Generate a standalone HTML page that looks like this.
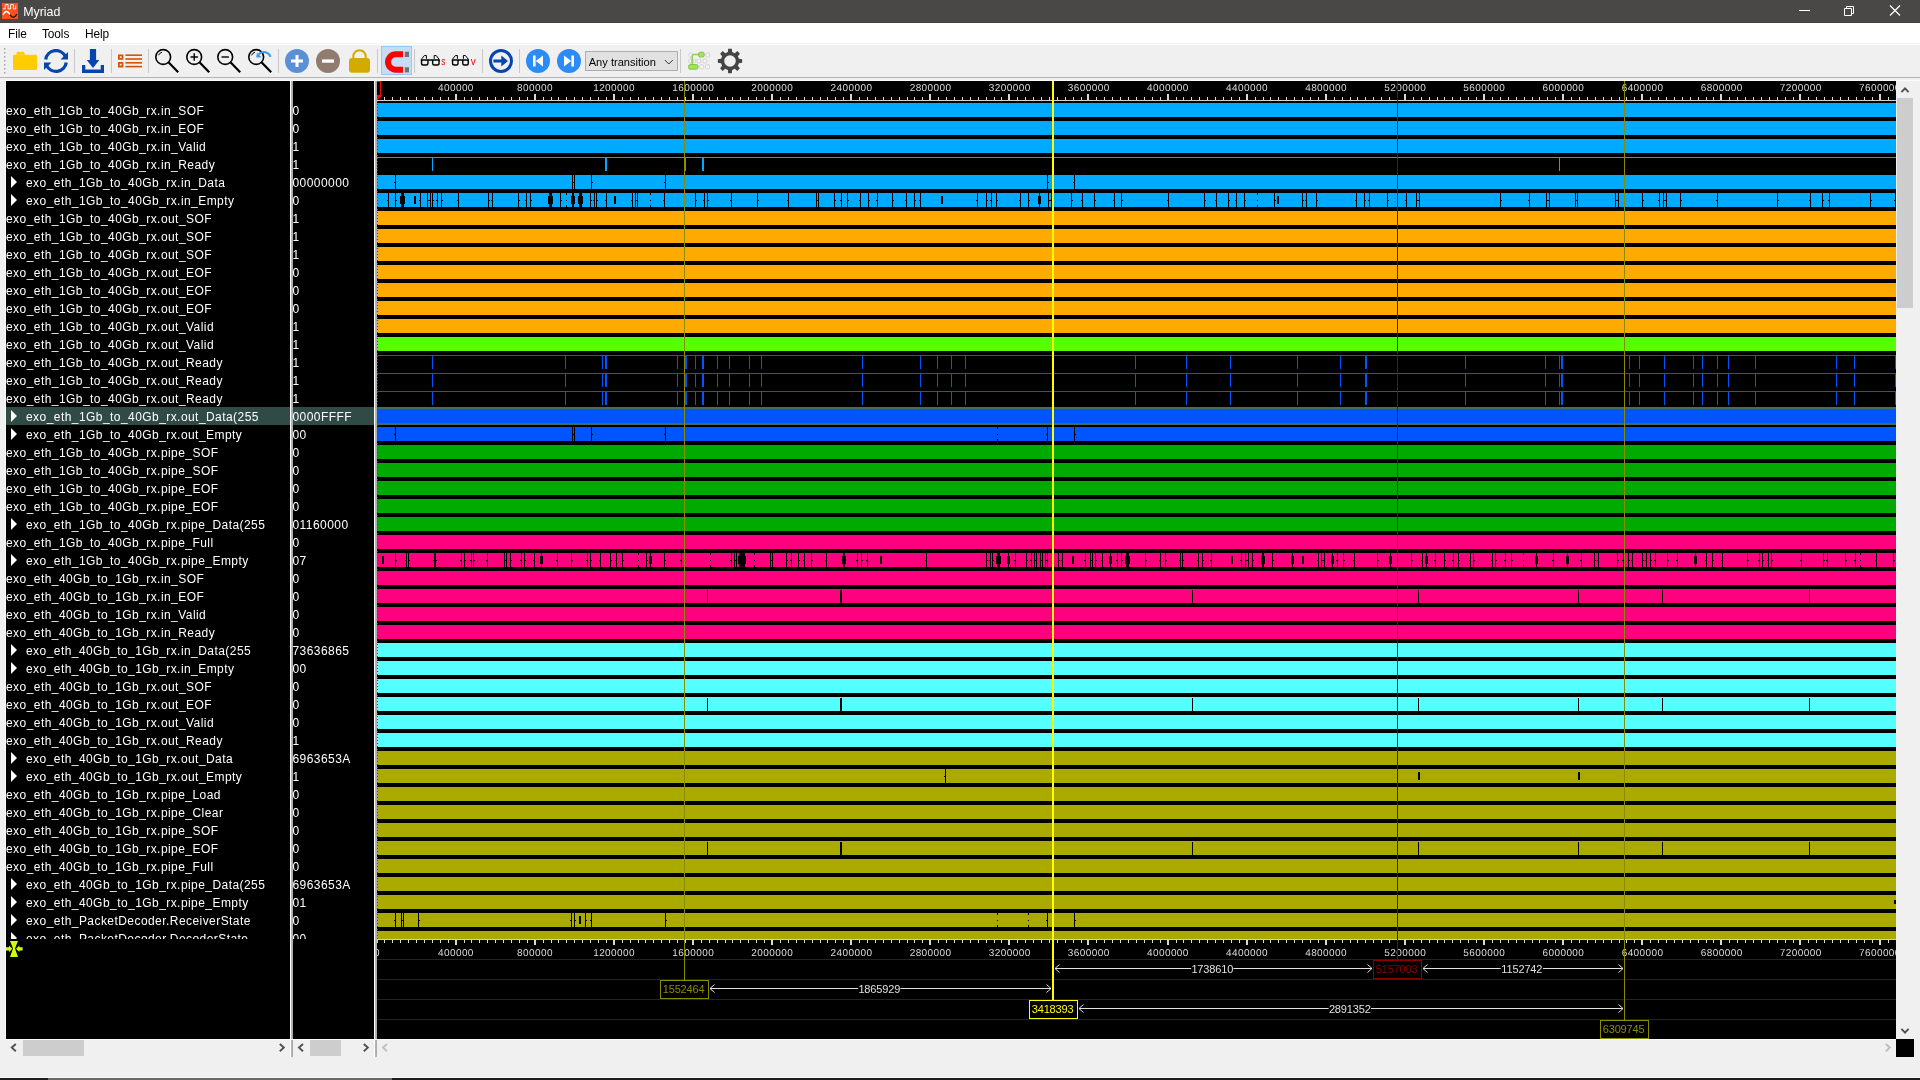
<!DOCTYPE html>
<html><head><meta charset="utf-8"><title>Myriad</title>
<style>
html,body{margin:0;padding:0;}
body{width:1920px;height:1080px;overflow:hidden;background:#f0f0f0;font-family:"Liberation Sans",sans-serif;position:relative;}
.abs{position:absolute;}
.gl{will-change:transform;}
#title{left:0;top:0;width:1920px;height:23px;background:#4a4847;}
#title .t{left:23.2px;top:3.6px;color:#fff;font-size:12.4px;line-height:16px;}
#menu{left:0;top:23px;width:1920px;height:20px;background:#fff;}
#mline{left:0;top:43px;width:1920px;height:1px;background:#f4f4f4;}
#tline{left:0;top:22px;width:1920px;height:1px;background:#434140;}
#menu span{position:absolute;top:3px;font-size:11.9px;letter-spacing:-0.1px;line-height:16px;color:#000;}
#tb{left:0;top:44px;width:1920px;height:33px;background:#f0f0f0;border-top:1px solid #fcfcfc;box-sizing:border-box;}
#tbline{left:0;top:77px;width:1920px;height:1px;background:#b4b4b4;}
#tbline2{left:0;top:80px;width:1920px;height:1px;background:#fcfcfc;}
.panel{background:#000;overflow:hidden;}
.nm{position:absolute;left:0;height:18px;line-height:18px;font-size:12px;letter-spacing:0.44px;color:#fff;white-space:pre;}
.sel{position:absolute;left:0;width:100%;height:18px;background:#304b46;}
.tri{position:absolute;left:5px;width:0;height:0;border-left:6px solid #fff;border-top:6px solid transparent;border-bottom:6px solid transparent;}
.spl{background:linear-gradient(90deg,#fff 0,#fff 33%,#b8b8b8 34%,#a8a8a8 100%);}
</style></head><body>

<div id="title" class="abs gl">
<svg class="abs" style="left:2px;top:3px" width="16" height="16" viewBox="0 0 16 16"><rect width="16" height="16" fill="#ff4f1f"/><path d="M0.8 5.9H3.3V1.6H6.1V5.9H8.6V1.6H11.4V5.9H13.7V2.6" fill="none" stroke="#fff" stroke-width="1" stroke-opacity="0.9"/><path d="M1 12Q4.3 5.2 8 11.6" fill="none" stroke="#fff" stroke-width="1.3"/><path d="M8 11.6Q11.3 17.2 14.8 11.2" fill="none" stroke="#111" stroke-width="1.3"/></svg>
<div class="abs t">Myriad</div>
<svg class="abs" style="left:1780px;top:0" width="140" height="23" viewBox="0 0 140 23" fill="none" stroke="#fff" stroke-width="1"><path d="M19 10.5H30"/><path d="M64.5 8.5H71.5V15.5H64.5Z"/><path d="M66.5 8.5V6.5H73.5V13.5H71.5"/><path d="M110 5.5L120 15.5M120 5.5L110 15.5" stroke-width="1.2"/></svg>
</div>
<div id="menu" class="abs gl"><span style="left:8px">File</span><span style="left:42px">Tools</span><span style="left:85px">Help</span></div>
<div id="mline" class="abs"></div><div id="tline" class="abs"></div><div id="tb" class="abs"></div><div id="tbline" class="abs"></div><div id="tbline2" class="abs"></div>
<svg class="abs gl" style="left:0;top:44px" width="760" height="34" viewBox="0 44 760 34" font-family="Liberation Sans, sans-serif">
<rect x="4" y="48" width="1.5" height="1.5" fill="#a8a8a8"/>
<rect x="4" y="52" width="1.5" height="1.5" fill="#a8a8a8"/>
<rect x="4" y="56" width="1.5" height="1.5" fill="#a8a8a8"/>
<rect x="4" y="60" width="1.5" height="1.5" fill="#a8a8a8"/>
<rect x="4" y="64" width="1.5" height="1.5" fill="#a8a8a8"/>
<rect x="4" y="68" width="1.5" height="1.5" fill="#a8a8a8"/>
<rect x="4" y="72" width="1.5" height="1.5" fill="#a8a8a8"/>
<rect x="74" y="49" width="1" height="24" fill="#c8c8c8"/>
<rect x="111" y="49" width="1" height="24" fill="#c8c8c8"/>
<rect x="148" y="49" width="1" height="24" fill="#c8c8c8"/>
<rect x="278" y="49" width="1" height="24" fill="#c8c8c8"/>
<rect x="377" y="49" width="1" height="24" fill="#c8c8c8"/>
<rect x="414" y="49" width="1" height="24" fill="#c8c8c8"/>
<rect x="482" y="49" width="1" height="24" fill="#c8c8c8"/>
<rect x="519" y="49" width="1" height="24" fill="#c8c8c8"/>
<rect x="680" y="49" width="1" height="24" fill="#c8c8c8"/>
<path d="M16 54.8L16.8 52.4Q17 51.8 17.8 51.8H23.2Q24 51.8 24.2 52.4L25 54.8Z" fill="#ffcc00"/>
<rect x="13" y="54.7" width="24" height="15.3" rx="1.3" fill="#ffcc00"/>
<g fill="none" stroke="#0645ad" stroke-width="3.3"><path d="M45.7 59.5A10.4 10.4 0 0 1 65.4 56.6"/><path d="M66.3 62.5A10.4 10.4 0 0 1 46.6 65.4"/></g>
<path d="M68 52V59.6H60.6z" fill="#0645ad"/><path d="M44 70V62.4H51.4z" fill="#0645ad"/>
<path d="M89.9 49H96.1V60H99.3L93 68L86.7 60H89.9Z" fill="#0645ad"/>
<path d="M82 65H85.3V69.5H100.7V65H104V73H82Z" fill="#0645ad"/>
<g fill="#d35400"><path d="M118 54.4h5.4v5.4h-5.4zM119.8 56.2v1.8h1.8v-1.8zM118 62h5.4v5.4h-5.4zM119.8 63.8v1.8h1.8v-1.8z" fill-rule="evenodd"/><rect x="125.4" y="54.4" width="16.6" height="1.6"/><rect x="125.4" y="58.2" width="16.6" height="1.6"/><rect x="125.4" y="62" width="16.6" height="1.6"/><rect x="125.4" y="65.8" width="16.6" height="1.6"/></g>
<circle cx="163.2" cy="57" r="7.4" fill="none" stroke="#000" stroke-width="1.6"/>
<path d="M168.5 62.300000000000004L178.2 72.2" stroke="#000" stroke-width="2.2" fill="none"/>
<path d="M158.6 55.3A5 5 0 0 1 162.0 52.2" stroke="#000" stroke-width="1" fill="none"/>
<circle cx="194.2" cy="57" r="7.4" fill="none" stroke="#000" stroke-width="1.6"/>
<path d="M199.5 62.300000000000004L209.2 72.2" stroke="#000" stroke-width="2.2" fill="none"/>
<path d="M190.5 57H197.89999999999998M194.2 53.3V60.7" stroke="#000" stroke-width="1.4" fill="none"/>
<circle cx="225.2" cy="57" r="7.4" fill="none" stroke="#000" stroke-width="1.6"/>
<path d="M230.5 62.300000000000004L240.2 72.2" stroke="#000" stroke-width="2.2" fill="none"/>
<path d="M221.5 57H228.89999999999998" stroke="#000" stroke-width="1.4" fill="none"/>
<circle cx="256.2" cy="57" r="7.4" fill="none" stroke="#000" stroke-width="1.6"/>
<path d="M261.5 62.300000000000004L271.2 72.2" stroke="#000" stroke-width="2.2" fill="none"/>
<path d="M251.6 55.3A5 5 0 0 1 255.0 52.2" stroke="#000" stroke-width="1" fill="none"/>
<path d="M270.6 56.8A7.2 7.2 0 0 0 258.8 54.2" stroke="#3a9de8" stroke-width="2" fill="none"/>
<path d="M256.2 57.6L257 52.6L261.4 57.2Z" fill="#3a9de8"/>
<circle cx="297" cy="61" r="12" fill="#5b8fd8"/><path d="M291 59.5h4.5v-4.5h3v4.5h4.5v3h-4.5v4.5h-3v-4.5h-4.5z" fill="#fff"/>
<circle cx="328" cy="61" r="12" fill="#917b6e"/><rect x="322" y="59.4" width="12" height="3.3" fill="#fff"/>
<path d="M353.3 59V56.4A6.2 6.2 0 0 1 365.7 56.4V59" fill="none" stroke="#d4aa00" stroke-width="2"/>
<rect x="349" y="58" width="21" height="14.8" rx="3" fill="#d4aa00"/>
<rect x="381.5" y="46.5" width="30" height="28" fill="#c3def4" stroke="#92c9f8" stroke-width="1"/>
<path d="M403 51.3H395.7A10.7 10.7 0 0 0 395.7 72.7H403V66.7H395.7A4.7 4.7 0 0 1 395.7 57.3H403Z" fill="#ff0000"/>
<rect x="404.8" y="51.7" width="4.2" height="5.3" fill="#707070"/><rect x="404.8" y="67.3" width="4.2" height="5.1" fill="#707070"/>
<g fill="none" stroke="#000" stroke-width="1.4" stroke-linejoin="miter"><path d="M421.55 60V63.2Q421.55 65 423.35 65H426.3Q427.95 65 427.95 63.2V60"/><path d="M439.05 60V63.2Q439.05 65 437.25 65H434.3Q432.65000000000003 65 432.65000000000003 63.2V60"/><path d="M420.8 60H439.8" stroke-width="1.5"/><path d="M421.40000000000003 59.4L424.40000000000003 55.5H426.40000000000003V58.8" stroke-width="1"/><path d="M439.2 59.4L436.2 55.5H434.2V58.8" stroke-width="1"/></g>
<text x="441.2" y="64.9" font-size="10.5px" fill="#ff0000" textLength="4.2" lengthAdjust="spacingAndGlyphs">s</text>
<g fill="none" stroke="#000" stroke-width="1.4" stroke-linejoin="miter"><path d="M452.55 60V63.2Q452.55 65 454.35 65H456.40000000000003Q458.05 65 458.05 63.2V60"/><path d="M468.25 60V63.2Q468.25 65 466.45 65H464.4Q462.75 65 462.75 63.2V60"/><path d="M451.8 60H469.0" stroke-width="1.5"/><path d="M452.40000000000003 59.4L455.40000000000003 55.5H457.40000000000003V58.8" stroke-width="1"/><path d="M468.4 59.4L465.4 55.5H463.4V58.8" stroke-width="1"/></g>
<text x="470.8" y="64.9" font-size="10.5px" fill="#ff0000" textLength="5.0" lengthAdjust="spacingAndGlyphs">v</text>
<circle cx="501" cy="61" r="10.5" fill="none" stroke="#0645ad" stroke-width="3"/>
<path d="M493.4 59.6H501.3V55.4L508 61L501.3 66.6V62.4H493.4Z" fill="#0645ad"/>
<circle cx="538" cy="61" r="12" fill="#2b8bf7"/><path d="M533 55.5h2.6v11h-2.6zM543 55.5V66.5L535.8 61Z" fill="#fff"/>
<circle cx="569" cy="61" r="12" fill="#2b8bf7"/><path d="M574 55.5h-2.6v11h2.6zM564 55.5V66.5L571.2 61Z" fill="#fff"/>
<rect x="585.5" y="51.5" width="92" height="19" fill="#e1e1e1" stroke="#adadad" stroke-width="1"/>
<text x="588.7" y="66.3" font-size="11.1px" fill="#000">Any transition</text>
<path d="M664.8 60L668.8 64L672.8 60" fill="none" stroke="#333" stroke-width="1"/>
<g>
<rect x="688.9" y="53.1" width="3.8" height="3.8" rx="1" fill="#f6f6f6" stroke="#c9c9c9" stroke-width="0.8"/>
<rect x="705.8" y="53.1" width="3.8" height="3.8" rx="1" fill="#f6f6f6" stroke="#c9c9c9" stroke-width="0.8"/>
<rect x="688.9" y="59.1" width="3.0" height="3.8" rx="1" fill="#f6f6f6" stroke="#c9c9c9" stroke-width="0.8"/>
<rect x="693.4" y="59.1" width="2.2" height="3.8" rx="1" fill="#f6f6f6" stroke="#c9c9c9" stroke-width="0.8"/>
<rect x="696.9" y="59.1" width="3.9" height="3.8" rx="1" fill="#f6f6f6" stroke="#c9c9c9" stroke-width="0.8"/>
<rect x="702.9" y="59.1" width="3.9" height="3.8" rx="1" fill="#f6f6f6" stroke="#c9c9c9" stroke-width="0.8"/>
<rect x="699.7" y="64.9" width="3.9" height="3.8" rx="1" fill="#f6f6f6" stroke="#c9c9c9" stroke-width="0.8"/>
<rect x="705.4" y="64.9" width="4.1" height="3.8" rx="1" fill="#f6f6f6" stroke="#c9c9c9" stroke-width="0.8"/>
<path d="M692.2 65V56.4Q692.2 54.6 694 54.6H699" fill="none" stroke="#8fd053" stroke-width="1.5"/>
<rect x="698.6" y="52.2" width="5.6" height="4.8" rx="1.5" fill="#a4e45a" stroke="#7cc23c" stroke-width="0.9"/>
<rect x="688.6" y="64.6" width="9.4" height="4.6" rx="1.5" fill="#a4e45a" stroke="#7cc23c" stroke-width="0.9"/>
</g>
<path d="M727.86 52.05L728.16 48.84L731.84 48.84L732.14 52.05L734.81 53.16L737.30 51.10L739.90 53.70L737.84 56.19L738.95 58.86L742.16 59.16L742.16 62.84L738.95 63.14L737.84 65.81L739.90 68.30L737.30 70.90L734.81 68.84L732.14 69.95L731.84 73.16L728.16 73.16L727.86 69.95L725.19 68.84L722.70 70.90L720.10 68.30L722.16 65.81L721.05 63.14L717.84 62.84L717.84 59.16L721.05 58.86L722.16 56.19L720.10 53.70L722.70 51.10L725.19 53.16Z M735.8 61A5.8 5.8 0 1 0 724.2 61A5.8 5.8 0 1 0 735.8 61Z" fill="#444" fill-rule="evenodd"/>
</svg>
<div class="abs panel gl" id="names" style="left:6px;top:81px;width:284px;height:958px">
<div class="abs" style="left:0;top:0;width:284px;height:858px;overflow:hidden">
<div class="sel" style="top:326px"></div>
<div class="nm" style="top:21px">exo_eth_1Gb_to_40Gb_rx.in_SOF</div>
<div class="nm" style="top:39px">exo_eth_1Gb_to_40Gb_rx.in_EOF</div>
<div class="nm" style="top:57px">exo_eth_1Gb_to_40Gb_rx.in_Valid</div>
<div class="nm" style="top:75px">exo_eth_1Gb_to_40Gb_rx.in_Ready</div>
<div class="tri" style="top:95px"></div><div class="nm" style="top:93px;left:20px">exo_eth_1Gb_to_40Gb_rx.in_Data</div>
<div class="tri" style="top:113px"></div><div class="nm" style="top:111px;left:20px">exo_eth_1Gb_to_40Gb_rx.in_Empty</div>
<div class="nm" style="top:129px">exo_eth_1Gb_to_40Gb_rx.out_SOF</div>
<div class="nm" style="top:147px">exo_eth_1Gb_to_40Gb_rx.out_SOF</div>
<div class="nm" style="top:165px">exo_eth_1Gb_to_40Gb_rx.out_SOF</div>
<div class="nm" style="top:183px">exo_eth_1Gb_to_40Gb_rx.out_EOF</div>
<div class="nm" style="top:201px">exo_eth_1Gb_to_40Gb_rx.out_EOF</div>
<div class="nm" style="top:219px">exo_eth_1Gb_to_40Gb_rx.out_EOF</div>
<div class="nm" style="top:237px">exo_eth_1Gb_to_40Gb_rx.out_Valid</div>
<div class="nm" style="top:255px">exo_eth_1Gb_to_40Gb_rx.out_Valid</div>
<div class="nm" style="top:273px">exo_eth_1Gb_to_40Gb_rx.out_Ready</div>
<div class="nm" style="top:291px">exo_eth_1Gb_to_40Gb_rx.out_Ready</div>
<div class="nm" style="top:309px">exo_eth_1Gb_to_40Gb_rx.out_Ready</div>
<div class="tri" style="top:329px"></div><div class="nm" style="top:327px;left:20px">exo_eth_1Gb_to_40Gb_rx.out_Data(255</div>
<div class="tri" style="top:347px"></div><div class="nm" style="top:345px;left:20px">exo_eth_1Gb_to_40Gb_rx.out_Empty</div>
<div class="nm" style="top:363px">exo_eth_1Gb_to_40Gb_rx.pipe_SOF</div>
<div class="nm" style="top:381px">exo_eth_1Gb_to_40Gb_rx.pipe_SOF</div>
<div class="nm" style="top:399px">exo_eth_1Gb_to_40Gb_rx.pipe_EOF</div>
<div class="nm" style="top:417px">exo_eth_1Gb_to_40Gb_rx.pipe_EOF</div>
<div class="tri" style="top:437px"></div><div class="nm" style="top:435px;left:20px">exo_eth_1Gb_to_40Gb_rx.pipe_Data(255</div>
<div class="nm" style="top:453px">exo_eth_1Gb_to_40Gb_rx.pipe_Full</div>
<div class="tri" style="top:473px"></div><div class="nm" style="top:471px;left:20px">exo_eth_1Gb_to_40Gb_rx.pipe_Empty</div>
<div class="nm" style="top:489px">exo_eth_40Gb_to_1Gb_rx.in_SOF</div>
<div class="nm" style="top:507px">exo_eth_40Gb_to_1Gb_rx.in_EOF</div>
<div class="nm" style="top:525px">exo_eth_40Gb_to_1Gb_rx.in_Valid</div>
<div class="nm" style="top:543px">exo_eth_40Gb_to_1Gb_rx.in_Ready</div>
<div class="tri" style="top:563px"></div><div class="nm" style="top:561px;left:20px">exo_eth_40Gb_to_1Gb_rx.in_Data(255</div>
<div class="tri" style="top:581px"></div><div class="nm" style="top:579px;left:20px">exo_eth_40Gb_to_1Gb_rx.in_Empty</div>
<div class="nm" style="top:597px">exo_eth_40Gb_to_1Gb_rx.out_SOF</div>
<div class="nm" style="top:615px">exo_eth_40Gb_to_1Gb_rx.out_EOF</div>
<div class="nm" style="top:633px">exo_eth_40Gb_to_1Gb_rx.out_Valid</div>
<div class="nm" style="top:651px">exo_eth_40Gb_to_1Gb_rx.out_Ready</div>
<div class="tri" style="top:671px"></div><div class="nm" style="top:669px;left:20px">exo_eth_40Gb_to_1Gb_rx.out_Data</div>
<div class="tri" style="top:689px"></div><div class="nm" style="top:687px;left:20px">exo_eth_40Gb_to_1Gb_rx.out_Empty</div>
<div class="nm" style="top:705px">exo_eth_40Gb_to_1Gb_rx.pipe_Load</div>
<div class="nm" style="top:723px">exo_eth_40Gb_to_1Gb_rx.pipe_Clear</div>
<div class="nm" style="top:741px">exo_eth_40Gb_to_1Gb_rx.pipe_SOF</div>
<div class="nm" style="top:759px">exo_eth_40Gb_to_1Gb_rx.pipe_EOF</div>
<div class="nm" style="top:777px">exo_eth_40Gb_to_1Gb_rx.pipe_Full</div>
<div class="tri" style="top:797px"></div><div class="nm" style="top:795px;left:20px">exo_eth_40Gb_to_1Gb_rx.pipe_Data(255</div>
<div class="tri" style="top:815px"></div><div class="nm" style="top:813px;left:20px">exo_eth_40Gb_to_1Gb_rx.pipe_Empty</div>
<div class="tri" style="top:833px"></div><div class="nm" style="top:831px;left:20px">exo_eth_PacketDecoder.ReceiverState</div>
<div class="tri" style="top:851px"></div><div class="nm" style="top:849px;left:20px">exo_eth_PacketDecoder.DecoderState</div>
</div>
<svg class="abs" style="left:0;top:859px" width="18" height="18" viewBox="0 0 18 18"><path d="M4 1H12L9 8.5L12 17H4L7 8.5Z" fill="#ccff00"/><path d="M0 7.2H3V5.6L6.4 8.8L3 12V10.4H0Z" fill="#ccff00"/><path d="M16.6 7.2H13.4V5.6L10 8.8L13.4 12V10.4H16.6Z" fill="#ccff00"/></svg>
</div>
<div class="abs spl" style="left:290px;top:81px;width:3px;height:976px"></div>
<div class="abs panel gl" id="vals" style="left:293px;top:81px;width:81px;height:958px">
<div class="abs" style="left:0;top:0;width:81px;height:858px;overflow:hidden">
<div class="sel" style="top:326px"></div>
<div class="nm" style="top:21px;left:-0.5px">0</div>
<div class="nm" style="top:39px;left:-0.5px">0</div>
<div class="nm" style="top:57px;left:-0.5px">1</div>
<div class="nm" style="top:75px;left:-0.5px">1</div>
<div class="nm" style="top:93px;left:-0.5px">00000000</div>
<div class="nm" style="top:111px;left:-0.5px">0</div>
<div class="nm" style="top:129px;left:-0.5px">1</div>
<div class="nm" style="top:147px;left:-0.5px">1</div>
<div class="nm" style="top:165px;left:-0.5px">1</div>
<div class="nm" style="top:183px;left:-0.5px">0</div>
<div class="nm" style="top:201px;left:-0.5px">0</div>
<div class="nm" style="top:219px;left:-0.5px">0</div>
<div class="nm" style="top:237px;left:-0.5px">1</div>
<div class="nm" style="top:255px;left:-0.5px">1</div>
<div class="nm" style="top:273px;left:-0.5px">1</div>
<div class="nm" style="top:291px;left:-0.5px">1</div>
<div class="nm" style="top:309px;left:-0.5px">1</div>
<div class="nm" style="top:327px;left:-0.5px">0000FFFF</div>
<div class="nm" style="top:345px;left:-0.5px">00</div>
<div class="nm" style="top:363px;left:-0.5px">0</div>
<div class="nm" style="top:381px;left:-0.5px">0</div>
<div class="nm" style="top:399px;left:-0.5px">0</div>
<div class="nm" style="top:417px;left:-0.5px">0</div>
<div class="nm" style="top:435px;left:-0.5px">01160000</div>
<div class="nm" style="top:453px;left:-0.5px">0</div>
<div class="nm" style="top:471px;left:-0.5px">07</div>
<div class="nm" style="top:489px;left:-0.5px">0</div>
<div class="nm" style="top:507px;left:-0.5px">0</div>
<div class="nm" style="top:525px;left:-0.5px">0</div>
<div class="nm" style="top:543px;left:-0.5px">0</div>
<div class="nm" style="top:561px;left:-0.5px">73636865</div>
<div class="nm" style="top:579px;left:-0.5px">00</div>
<div class="nm" style="top:597px;left:-0.5px">0</div>
<div class="nm" style="top:615px;left:-0.5px">0</div>
<div class="nm" style="top:633px;left:-0.5px">0</div>
<div class="nm" style="top:651px;left:-0.5px">1</div>
<div class="nm" style="top:669px;left:-0.5px">6963653A</div>
<div class="nm" style="top:687px;left:-0.5px">1</div>
<div class="nm" style="top:705px;left:-0.5px">0</div>
<div class="nm" style="top:723px;left:-0.5px">0</div>
<div class="nm" style="top:741px;left:-0.5px">0</div>
<div class="nm" style="top:759px;left:-0.5px">0</div>
<div class="nm" style="top:777px;left:-0.5px">0</div>
<div class="nm" style="top:795px;left:-0.5px">6963653A</div>
<div class="nm" style="top:813px;left:-0.5px">01</div>
<div class="nm" style="top:831px;left:-0.5px">0</div>
<div class="nm" style="top:849px;left:-0.5px">00</div>
</div></div>
<div class="abs spl" style="left:374px;top:81px;width:3px;height:976px"></div>
<svg class="abs gl" style="left:377px;top:81px" width="1519" height="958" viewBox="377 81 1519 958" shape-rendering="crispEdges" font-family="Liberation Sans, sans-serif">
<rect x="377" y="81" width="1519" height="958" fill="#000"/>
<rect x="377" y="103" width="1519" height="14" fill="#00aaff"/>
<rect x="377" y="121" width="1519" height="14" fill="#00aaff"/>
<rect x="377" y="139" width="1519" height="14" fill="#00aaff"/>
<rect x="377" y="157" width="1519" height="1" fill="#00aaff"/>
<path d="M432 157h1v14h-1zM605 157h2v14h-2zM685 157h1v14h-1zM702 157h2v14h-2zM1559 157h1v14h-1z" fill="#00aaff"/>
<rect x="377" y="175" width="1519" height="14" fill="#00aaff"/>
<path d="M395 175h1v14h-1zM394 182h1v1h-1zM572 175h1v14h-1zM573 182h1v1h-1zM574 175h1v14h-1zM573 182h1v1h-1zM591 175h1v14h-1zM592 182h1v1h-1zM665 175h1v14h-1zM664 182h1v1h-1zM1047 175h1v14h-1zM1048 182h1v1h-1zM1074 175h1v14h-1zM1073 182h1v1h-1z" fill="#000"/>
<rect x="377" y="193" width="1519" height="14" fill="#00aaff"/>
<path d="M388 193h1v14h-1zM387 200h1v1h-1zM395 193h1v14h-1zM396 200h1v1h-1zM401 193L404 193L404 195L405 197L405 203L404 205L404 207L401 207L401 205L400 203L400 197L401 195zM415 193L415 193L415 195L416 197L416 203L415 205L415 207L415 207L415 205L414 203L414 197L415 195zM420 193h1v14h-1zM419 200h1v1h-1zM427 193h1v14h-1zM428 200h1v1h-1zM430 193h1v14h-1zM429 200h1v1h-1zM432 193h1v14h-1zM433 200h1v1h-1zM437 193h1v14h-1zM436 200h1v1h-1zM441 193h1v14h-1zM442 200h1v1h-1zM458 193h1v14h-1zM457 200h1v1h-1zM488 193h1v14h-1zM489 200h1v1h-1zM492 193h1v14h-1zM491 200h1v1h-1zM518 193h1v14h-1zM519 200h1v1h-1zM526 193h1v14h-1zM525 200h1v1h-1zM530 193h1v14h-1zM531 200h1v1h-1zM549 193L552 193L552 195L553 197L553 203L552 205L552 207L549 207L549 205L548 203L548 197L549 195zM560 193h1v14h-1zM561 200h1v1h-1zM566 193h1v2h-1zM566 200h1v1h-1zM566 205h1v2h-1zM572 193L574 193L574 195L575 197L575 203L574 205L574 207L572 207L572 205L571 203L571 197L572 195zM579 193L582 193L582 195L583 197L583 203L582 205L582 207L579 207L579 205L578 203L578 197L579 195zM590 193h1v14h-1zM591 200h1v1h-1zM594 193h1v14h-1zM593 200h1v1h-1zM596 193h1v14h-1zM597 200h1v1h-1zM606 193h1v14h-1zM605 200h1v1h-1zM615 193L615 193L615 195L616 197L616 203L615 205L615 207L615 207L615 205L614 203L614 197L615 195zM632 193h1v14h-1zM631 200h1v1h-1zM635 193h1v14h-1zM636 200h1v1h-1zM637 193h1v14h-1zM636 200h1v1h-1zM650 193h1v2h-1zM650 200h1v1h-1zM650 205h1v2h-1zM664 193h1v14h-1zM663 200h1v1h-1zM695 193h1v14h-1zM696 200h1v1h-1zM704 193h1v14h-1zM703 200h1v1h-1zM707 193h1v14h-1zM708 200h1v1h-1zM731 193h1v14h-1zM730 200h1v1h-1zM757 193h1v14h-1zM758 200h1v1h-1zM788 193h1v14h-1zM787 200h1v1h-1zM816 193h1v14h-1zM817 200h1v1h-1zM818 193h1v14h-1zM817 200h1v1h-1zM834 193h1v14h-1zM835 200h1v1h-1zM841 193h1v14h-1zM840 200h1v1h-1zM847 193h1v14h-1zM848 200h1v1h-1zM860 193h1v14h-1zM859 200h1v1h-1zM868 193h1v14h-1zM869 200h1v1h-1zM877 193h1v14h-1zM876 200h1v1h-1zM892 193h1v14h-1zM893 200h1v1h-1zM906 193h1v14h-1zM905 200h1v1h-1zM914 193h1v14h-1zM915 200h1v1h-1zM920 193h1v14h-1zM919 200h1v1h-1zM942 193L942 193L942 195L943 197L943 203L942 205L942 207L942 207L942 205L941 203L941 197L942 195zM977 193h1v14h-1zM976 200h1v1h-1zM986 193h1v14h-1zM987 200h1v1h-1zM991 193h1v14h-1zM990 200h1v1h-1zM996 193h1v14h-1zM997 200h1v1h-1zM1020 193h1v14h-1zM1019 200h1v1h-1zM1028 193h1v14h-1zM1029 200h1v1h-1zM1039 193L1040 193L1040 195L1041 197L1041 203L1040 205L1040 207L1039 207L1039 205L1038 203L1038 197L1039 195zM1048 193h1v14h-1zM1049 200h1v1h-1zM1051 193h1v14h-1zM1050 200h1v1h-1zM1071 193h1v14h-1zM1072 200h1v1h-1zM1082 193h1v14h-1zM1081 200h1v1h-1zM1094 193h1v14h-1zM1095 200h1v1h-1zM1114 193h1v14h-1zM1113 200h1v1h-1zM1121 193h1v14h-1zM1122 200h1v1h-1zM1168 193h1v14h-1zM1167 200h1v1h-1zM1204 193h1v14h-1zM1205 200h1v1h-1zM1216 193h1v14h-1zM1215 200h1v1h-1zM1228 193h1v14h-1zM1229 200h1v1h-1zM1236 193h1v14h-1zM1235 200h1v1h-1zM1244 193h1v14h-1zM1245 200h1v1h-1zM1257 193h1v2h-1zM1257 200h1v1h-1zM1257 205h1v2h-1zM1274 193h1v14h-1zM1275 200h1v1h-1zM1278 193L1278 193L1278 195L1279 197L1279 203L1278 205L1278 207L1278 207L1278 205L1277 203L1277 197L1278 195zM1302 193h1v14h-1zM1303 200h1v1h-1zM1306 193h1v14h-1zM1305 200h1v1h-1zM1316 193h1v14h-1zM1317 200h1v1h-1zM1356 193h1v14h-1zM1355 200h1v1h-1zM1364 193h1v14h-1zM1365 200h1v1h-1zM1369 193h1v14h-1zM1368 200h1v1h-1zM1387 193h1v14h-1zM1388 200h1v1h-1zM1406 193h1v14h-1zM1405 200h1v1h-1zM1416 193h1v14h-1zM1417 200h1v1h-1zM1419 193h1v14h-1zM1418 200h1v1h-1zM1500 193h1v14h-1zM1501 200h1v1h-1zM1529 193h1v14h-1zM1528 200h1v1h-1zM1546 193h1v14h-1zM1547 200h1v1h-1zM1549 193h1v14h-1zM1548 200h1v1h-1zM1575 193h1v14h-1zM1576 200h1v1h-1zM1577 193h1v14h-1zM1576 200h1v1h-1zM1615 193h1v14h-1zM1616 200h1v1h-1zM1618 193h1v14h-1zM1617 200h1v1h-1zM1642 193h1v14h-1zM1643 200h1v1h-1zM1659 193h1v14h-1zM1658 200h1v1h-1zM1663 193h1v14h-1zM1664 200h1v1h-1zM1666 193h1v14h-1zM1665 200h1v1h-1zM1680 193h1v14h-1zM1681 200h1v1h-1zM1717 193h1v14h-1zM1716 200h1v1h-1zM1777 193h1v14h-1zM1778 200h1v1h-1zM1810 193h1v14h-1zM1809 200h1v1h-1zM1822 193h1v14h-1zM1823 200h1v1h-1zM1829 193h1v14h-1zM1828 200h1v1h-1zM1870 193h1v14h-1zM1871 200h1v1h-1zM1895 193h1v14h-1zM1894 200h1v1h-1z" fill="#000"/>
<rect x="377" y="211" width="1519" height="14" fill="#ffaa00"/>
<rect x="377" y="229" width="1519" height="14" fill="#ffaa00"/>
<rect x="377" y="247" width="1519" height="14" fill="#ffaa00"/>
<rect x="377" y="265" width="1519" height="14" fill="#ffaa00"/>
<rect x="377" y="283" width="1519" height="14" fill="#ffaa00"/>
<rect x="377" y="301" width="1519" height="14" fill="#ffaa00"/>
<rect x="377" y="319" width="1519" height="14" fill="#ffaa00"/>
<rect x="377" y="337" width="1519" height="14" fill="#55ff00"/>
<rect x="377" y="355" width="1519" height="1" fill="#0055ff"/>
<path d="M432 355h1v14h-1zM565 355h1v14h-1zM602 355h1v14h-1zM605 355h2v14h-2zM677 355h1v14h-1zM685 355h2v14h-2zM695 355h1v14h-1zM702 355h2v14h-2zM717 355h1v14h-1zM729 355h1v14h-1zM749 355h1v14h-1zM761 355h1v14h-1zM862 355h1v14h-1zM920 355h1v14h-1zM937 355h1v14h-1zM951 355h1v14h-1zM965 355h1v14h-1zM1135 355h1v14h-1zM1186 355h1v14h-1zM1230 355h1v14h-1zM1297 355h1v14h-1zM1340 355h1v14h-1zM1365 355h2v14h-2zM1465 355h1v14h-1zM1545 355h1v14h-1zM1559 355h1v14h-1zM1561 355h2v14h-2zM1629 355h1v14h-1zM1639 355h1v14h-1zM1664 355h1v14h-1zM1693 355h1v14h-1zM1702 355h1v14h-1zM1717 355h1v14h-1zM1728 355h1v14h-1zM1755 355h1v14h-1zM1836 355h1v14h-1zM1854 355h1v14h-1zM1895 355h1v14h-1z" fill="#0055ff"/>
<rect x="377" y="373" width="1519" height="1" fill="#0055ff"/>
<path d="M432 373h1v14h-1zM565 373h1v14h-1zM602 373h1v14h-1zM605 373h2v14h-2zM677 373h1v14h-1zM685 373h2v14h-2zM695 373h1v14h-1zM702 373h2v14h-2zM717 373h1v14h-1zM729 373h1v14h-1zM749 373h1v14h-1zM761 373h1v14h-1zM862 373h1v14h-1zM920 373h1v14h-1zM937 373h1v14h-1zM951 373h1v14h-1zM965 373h1v14h-1zM1135 373h1v14h-1zM1186 373h1v14h-1zM1230 373h1v14h-1zM1297 373h1v14h-1zM1340 373h1v14h-1zM1365 373h2v14h-2zM1465 373h1v14h-1zM1545 373h1v14h-1zM1559 373h1v14h-1zM1561 373h2v14h-2zM1629 373h1v14h-1zM1639 373h1v14h-1zM1664 373h1v14h-1zM1693 373h1v14h-1zM1702 373h1v14h-1zM1717 373h1v14h-1zM1728 373h1v14h-1zM1755 373h1v14h-1zM1836 373h1v14h-1zM1854 373h1v14h-1zM1895 373h1v14h-1z" fill="#0055ff"/>
<rect x="377" y="391" width="1519" height="1" fill="#0055ff"/>
<path d="M432 391h1v14h-1zM565 391h1v14h-1zM602 391h1v14h-1zM605 391h2v14h-2zM677 391h1v14h-1zM685 391h2v14h-2zM695 391h1v14h-1zM702 391h2v14h-2zM717 391h1v14h-1zM729 391h1v14h-1zM749 391h1v14h-1zM761 391h1v14h-1zM862 391h1v14h-1zM920 391h1v14h-1zM937 391h1v14h-1zM951 391h1v14h-1zM965 391h1v14h-1zM1135 391h1v14h-1zM1186 391h1v14h-1zM1230 391h1v14h-1zM1297 391h1v14h-1zM1340 391h1v14h-1zM1365 391h2v14h-2zM1465 391h1v14h-1zM1545 391h1v14h-1zM1559 391h1v14h-1zM1561 391h2v14h-2zM1629 391h1v14h-1zM1639 391h1v14h-1zM1664 391h1v14h-1zM1693 391h1v14h-1zM1702 391h1v14h-1zM1717 391h1v14h-1zM1728 391h1v14h-1zM1755 391h1v14h-1zM1836 391h1v14h-1zM1854 391h1v14h-1zM1895 391h1v14h-1z" fill="#0055ff"/>
<rect x="377" y="409" width="1519" height="14" fill="#0055ff"/>
<rect x="377" y="427" width="1519" height="14" fill="#0055ff"/>
<path d="M395 427h1v14h-1zM394 434h1v1h-1zM572 427h1v14h-1zM573 434h1v1h-1zM574 427h1v14h-1zM573 434h1v1h-1zM591 427h1v14h-1zM592 434h1v1h-1zM665 427h1v14h-1zM664 434h1v1h-1zM997 427h1v2h-1zM997 434h1v1h-1zM997 439h1v2h-1zM1047 427h1v14h-1zM1046 434h1v1h-1zM1074 427h1v14h-1zM1075 434h1v1h-1z" fill="#000"/>
<rect x="377" y="445" width="1519" height="14" fill="#00aa00"/>
<rect x="377" y="463" width="1519" height="14" fill="#00aa00"/>
<rect x="377" y="481" width="1519" height="14" fill="#00aa00"/>
<rect x="377" y="499" width="1519" height="14" fill="#00aa00"/>
<rect x="377" y="517" width="1519" height="14" fill="#00aa00"/>
<rect x="377" y="535" width="1519" height="14" fill="#ff007f"/>
<rect x="377" y="553" width="1519" height="14" fill="#ff007f"/>
<path d="M383 553L383 553L383 555L384 557L384 563L383 565L383 567L383 567L383 565L382 563L382 557L383 555zM395 553h1v14h-1zM396 560h1v1h-1zM406 553h1v14h-1zM405 560h1v1h-1zM408 553h1v14h-1zM409 560h1v1h-1zM434 553h1v14h-1zM433 560h1v1h-1zM435 553h1v14h-1zM436 560h1v1h-1zM461 553h1v14h-1zM460 560h1v1h-1zM464 553h1v14h-1zM465 560h1v1h-1zM471 553h1v14h-1zM470 560h1v1h-1zM473 553h1v14h-1zM474 560h1v1h-1zM487 553h1v14h-1zM486 560h1v1h-1zM504 553h1v14h-1zM505 560h1v1h-1zM506 553h1v14h-1zM505 560h1v1h-1zM510 553h1v14h-1zM511 560h1v1h-1zM521 553h1v14h-1zM520 560h1v1h-1zM524 553h1v14h-1zM525 560h1v1h-1zM534 553h1v14h-1zM533 560h1v1h-1zM541 553L542 553L542 555L543 557L543 563L542 565L542 567L541 567L541 565L540 563L540 557L541 555zM557 553h1v14h-1zM556 560h1v1h-1zM571 553h1v14h-1zM572 560h1v1h-1zM587 553h1v14h-1zM586 560h1v1h-1zM590 553h1v14h-1zM591 560h1v1h-1zM600 553h1v14h-1zM599 560h1v1h-1zM610 553h1v14h-1zM611 560h1v1h-1zM616 553h1v14h-1zM615 560h1v1h-1zM622 553h1v14h-1zM623 560h1v1h-1zM638 553h1v2h-1zM638 560h1v1h-1zM638 565h1v2h-1zM646 553h1v14h-1zM647 560h1v1h-1zM650 553L651 553L651 555L652 557L652 563L651 565L651 567L650 567L650 565L649 563L649 557L650 555zM664 553h1v14h-1zM665 560h1v1h-1zM681 553h1v14h-1zM680 560h1v1h-1zM710 553h1v2h-1zM710 560h1v1h-1zM710 565h1v2h-1zM731 553h1v14h-1zM730 560h1v1h-1zM734 553h1v14h-1zM735 560h1v1h-1zM736 553h1v14h-1zM735 560h1v1h-1zM739 553L745 553L745 555L746 557L746 563L745 565L745 567L739 567L739 565L738 563L738 557L739 555zM754 553h1v2h-1zM754 560h1v1h-1zM754 565h1v2h-1zM770 553h1v14h-1zM771 560h1v1h-1zM772 553h1v14h-1zM771 560h1v1h-1zM786 553h1v14h-1zM787 560h1v1h-1zM791 553h1v14h-1zM790 560h1v1h-1zM798 553h1v14h-1zM799 560h1v1h-1zM804 553h1v14h-1zM803 560h1v1h-1zM811 553h1v14h-1zM812 560h1v1h-1zM826 553h1v14h-1zM825 560h1v1h-1zM843 553L845 553L845 555L846 557L846 563L845 565L845 567L843 567L843 565L842 563L842 557L843 555zM857 553h1v14h-1zM856 560h1v1h-1zM861 553h1v14h-1zM862 560h1v1h-1zM867 553h1v14h-1zM866 560h1v1h-1zM881 553L881 553L881 555L882 557L882 563L881 565L881 567L881 567L881 565L880 563L880 557L881 555zM926 553h1v14h-1zM925 560h1v1h-1zM986 553h1v14h-1zM987 560h1v1h-1zM990 553h1v14h-1zM989 560h1v1h-1zM992 553h1v14h-1zM993 560h1v1h-1zM997 553L1000 553L1000 555L1001 557L1001 563L1000 565L1000 567L997 567L997 565L996 563L996 557L997 555zM1008 553L1009 553L1009 555L1010 557L1010 563L1009 565L1009 567L1008 567L1008 565L1007 563L1007 557L1008 555zM1015 553h1v14h-1zM1014 560h1v1h-1zM1026 553h1v14h-1zM1027 560h1v1h-1zM1031 553h1v14h-1zM1030 560h1v1h-1zM1034 553h1v14h-1zM1035 560h1v1h-1zM1036 553h1v14h-1zM1035 560h1v1h-1zM1040 553h1v14h-1zM1041 560h1v1h-1zM1042 553h1v14h-1zM1041 560h1v1h-1zM1045 553h1v14h-1zM1046 560h1v1h-1zM1047 553h1v14h-1zM1046 560h1v1h-1zM1058 553h1v14h-1zM1059 560h1v1h-1zM1062 553h1v14h-1zM1061 560h1v1h-1zM1073 553L1073 553L1073 555L1074 557L1074 563L1073 565L1073 567L1073 567L1073 565L1072 563L1072 557L1073 555zM1085 553h1v14h-1zM1084 560h1v1h-1zM1090 553h1v14h-1zM1091 560h1v1h-1zM1092 553h1v14h-1zM1091 560h1v1h-1zM1095 553h1v14h-1zM1096 560h1v1h-1zM1102 553h1v14h-1zM1101 560h1v1h-1zM1110 553L1111 553L1111 555L1112 557L1112 563L1111 565L1111 567L1110 567L1110 565L1109 563L1109 557L1110 555zM1117 553h1v14h-1zM1116 560h1v1h-1zM1121 553h1v14h-1zM1122 560h1v1h-1zM1126 553L1129 553L1129 555L1130 557L1130 563L1129 565L1129 567L1126 567L1126 565L1125 563L1125 557L1126 555zM1145 553h1v14h-1zM1146 560h1v1h-1zM1160 553h1v14h-1zM1159 560h1v1h-1zM1165 553h1v14h-1zM1166 560h1v1h-1zM1180 553h1v14h-1zM1179 560h1v1h-1zM1182 553h1v14h-1zM1183 560h1v1h-1zM1198 553h1v14h-1zM1197 560h1v1h-1zM1202 553h1v14h-1zM1203 560h1v1h-1zM1211 553h1v14h-1zM1210 560h1v1h-1zM1232 553L1232 553L1232 555L1233 557L1233 563L1232 565L1232 567L1232 567L1232 565L1231 563L1231 557L1232 555zM1241 553h1v14h-1zM1240 560h1v1h-1zM1245 553h1v14h-1zM1246 560h1v1h-1zM1248 553h1v14h-1zM1247 560h1v1h-1zM1252 553h1v14h-1zM1253 560h1v1h-1zM1262 553L1264 553L1264 555L1265 557L1265 563L1264 565L1264 567L1262 567L1262 565L1261 563L1261 557L1262 555zM1272 553h1v14h-1zM1273 560h1v1h-1zM1292 553L1293 553L1293 555L1294 557L1294 563L1293 565L1293 567L1292 567L1292 565L1291 563L1291 557L1292 555zM1303 553L1303 553L1303 555L1304 557L1304 563L1303 565L1303 567L1303 567L1303 565L1302 563L1302 557L1303 555zM1318 553h1v14h-1zM1317 560h1v1h-1zM1321 553h1v14h-1zM1322 560h1v1h-1zM1324 553h1v14h-1zM1323 560h1v1h-1zM1332 553L1333 553L1333 555L1334 557L1334 563L1333 565L1333 567L1332 567L1332 565L1331 563L1331 557L1332 555zM1337 553h1v14h-1zM1336 560h1v1h-1zM1343 553h1v14h-1zM1344 560h1v1h-1zM1354 553h1v14h-1zM1353 560h1v1h-1zM1377 553h1v14h-1zM1378 560h1v1h-1zM1390 553L1391 553L1391 555L1392 557L1392 563L1391 565L1391 567L1390 567L1390 565L1389 563L1389 557L1390 555zM1411 553h1v14h-1zM1412 560h1v1h-1zM1422 553h1v14h-1zM1421 560h1v1h-1zM1426 553L1427 553L1427 555L1428 557L1428 563L1427 565L1427 567L1426 567L1426 565L1425 563L1425 557L1426 555zM1435 553h1v14h-1zM1434 560h1v1h-1zM1444 553h1v14h-1zM1445 560h1v1h-1zM1453 553h1v14h-1zM1452 560h1v1h-1zM1458 553h1v14h-1zM1459 560h1v1h-1zM1470 553h1v14h-1zM1469 560h1v1h-1zM1473 553h1v14h-1zM1474 560h1v1h-1zM1492 553h1v14h-1zM1491 560h1v1h-1zM1495 553h1v14h-1zM1496 560h1v1h-1zM1505 553h1v14h-1zM1504 560h1v1h-1zM1511 553h1v14h-1zM1512 560h1v1h-1zM1523 553h1v2h-1zM1523 560h1v1h-1zM1523 565h1v2h-1zM1536 553L1537 553L1537 555L1538 557L1538 563L1537 565L1537 567L1536 567L1536 565L1535 563L1535 557L1536 555zM1553 553h1v14h-1zM1552 560h1v1h-1zM1567 553L1568 553L1568 555L1569 557L1569 563L1568 565L1568 567L1567 567L1567 565L1566 563L1566 557L1567 555zM1581 553h1v14h-1zM1580 560h1v1h-1zM1594 553h1v14h-1zM1595 560h1v1h-1zM1598 553h1v14h-1zM1597 560h1v1h-1zM1617 553h1v14h-1zM1618 560h1v1h-1zM1623 553h1v14h-1zM1622 560h1v1h-1zM1628 553h1v14h-1zM1629 560h1v1h-1zM1632 553h1v14h-1zM1631 560h1v1h-1zM1642 553h1v14h-1zM1643 560h1v1h-1zM1646 553h1v14h-1zM1645 560h1v1h-1zM1650 553h1v14h-1zM1651 560h1v1h-1zM1655 553h1v14h-1zM1654 560h1v1h-1zM1667 553h1v14h-1zM1668 560h1v1h-1zM1677 553h1v14h-1zM1676 560h1v1h-1zM1695 553L1696 553L1696 555L1697 557L1697 563L1696 565L1696 567L1695 567L1695 565L1694 563L1694 557L1695 555zM1706 553h1v14h-1zM1705 560h1v1h-1zM1712 553h1v14h-1zM1713 560h1v1h-1zM1722 553h1v14h-1zM1721 560h1v1h-1zM1747 553h1v14h-1zM1748 560h1v1h-1zM1759 553h1v14h-1zM1758 560h1v1h-1zM1762 553h1v14h-1zM1763 560h1v1h-1zM1768 553h1v14h-1zM1767 560h1v1h-1zM1771 553h1v14h-1zM1772 560h1v1h-1zM1801 553h1v14h-1zM1800 560h1v1h-1zM1823 553h1v14h-1zM1824 560h1v1h-1zM1827 553h1v14h-1zM1826 560h1v1h-1zM1845 553h1v14h-1zM1846 560h1v1h-1zM1855 553h1v14h-1zM1854 560h1v1h-1zM1860 553h1v2h-1zM1860 560h1v1h-1zM1860 565h1v2h-1zM1876 553h1v14h-1zM1875 560h1v1h-1zM1893 553h1v14h-1zM1894 560h1v1h-1z" fill="#000"/>
<rect x="377" y="571" width="1519" height="14" fill="#ff007f"/>
<rect x="377" y="589" width="1519" height="14" fill="#ff007f"/>
<path d="M707 590h1v13h-1zM840 590h2v13h-2zM1192 590h1v13h-1zM1418 590h1v13h-1zM1578 590h1v13h-1zM1662 590h1v13h-1zM1809 590h1v13h-1z" fill="#000"/>
<rect x="377" y="607" width="1519" height="14" fill="#ff007f"/>
<rect x="377" y="625" width="1519" height="14" fill="#ff007f"/>
<rect x="377" y="643" width="1519" height="14" fill="#55ffff"/>
<rect x="377" y="661" width="1519" height="14" fill="#55ffff"/>
<rect x="377" y="679" width="1519" height="14" fill="#55ffff"/>
<rect x="377" y="697" width="1519" height="14" fill="#55ffff"/>
<path d="M707 698h1v13h-1zM840 698h2v13h-2zM1192 698h1v13h-1zM1418 698h1v13h-1zM1578 698h1v13h-1zM1662 698h1v13h-1zM1809 698h1v13h-1z" fill="#000"/>
<rect x="377" y="715" width="1519" height="14" fill="#55ffff"/>
<rect x="377" y="733" width="1519" height="14" fill="#55ffff"/>
<rect x="377" y="751" width="1519" height="14" fill="#aaaa00"/>
<rect x="377" y="769" width="1519" height="14" fill="#aaaa00"/>
<path d="M945 769h1v14h-1zM944 776h1v1h-1zM1419 769L1419 769L1419 771L1420 773L1420 779L1419 781L1419 783L1419 783L1419 781L1418 779L1418 773L1419 771zM1579 769L1579 769L1579 771L1580 773L1580 779L1579 781L1579 783L1579 783L1579 781L1578 779L1578 773L1579 771z" fill="#000"/>
<rect x="377" y="787" width="1519" height="14" fill="#aaaa00"/>
<rect x="377" y="805" width="1519" height="14" fill="#aaaa00"/>
<rect x="377" y="823" width="1519" height="14" fill="#aaaa00"/>
<rect x="377" y="841" width="1519" height="14" fill="#aaaa00"/>
<path d="M707 842h1v13h-1zM840 842h2v13h-2zM1192 842h1v13h-1zM1418 842h1v13h-1zM1578 842h1v13h-1zM1662 842h1v13h-1zM1809 842h1v13h-1z" fill="#000"/>
<rect x="377" y="859" width="1519" height="14" fill="#aaaa00"/>
<rect x="377" y="877" width="1519" height="14" fill="#aaaa00"/>
<rect x="377" y="895" width="1519" height="14" fill="#aaaa00"/>
<rect x="1894" y="900" width="2" height="4" fill="#000"/>
<rect x="377" y="913" width="1519" height="14" fill="#aaaa00"/>
<path d="M395 913h1v14h-1zM394 920h1v1h-1zM401 913h1v14h-1zM402 920h1v1h-1zM403 913h1v14h-1zM402 920h1v1h-1zM418 913h1v14h-1zM419 920h1v1h-1zM571 913h1v14h-1zM570 920h1v1h-1zM574 913h1v14h-1zM575 920h1v1h-1zM580 913L580 913L580 915L581 917L581 923L580 925L580 927L580 927L580 925L579 923L579 917L580 915zM585 913h1v14h-1zM586 920h1v1h-1zM591 913h1v14h-1zM590 920h1v1h-1zM665 913h1v14h-1zM666 920h1v1h-1zM997 913h1v2h-1zM997 920h1v1h-1zM997 925h1v2h-1zM1028 913h1v2h-1zM1028 920h1v1h-1zM1028 925h1v2h-1zM1047 913h1v14h-1zM1046 920h1v1h-1zM1074 913h1v14h-1zM1075 920h1v1h-1z" fill="#000"/>
<rect x="377" y="931" width="1519" height="8" fill="#aaaa00"/>
<rect x="377" y="407" width="1519" height="2" fill="#4a6a5a"/><rect x="377" y="423" width="1519" height="2" fill="#4a6a5a"/>
<rect x="377" y="100" width="1519" height="1" fill="#d0d0d0"/>
<path d="M377 97h1v3h-1zM384 97h1v3h-1zM392 97h1v3h-1zM400 97h1v3h-1zM408 97h1v3h-1zM416 97h1v3h-1zM424 97h1v3h-1zM432 97h1v3h-1zM440 97h1v3h-1zM448 97h1v3h-1zM464 97h1v3h-1zM471 97h1v3h-1zM479 97h1v3h-1zM487 97h1v3h-1zM495 97h1v3h-1zM503 97h1v3h-1zM511 97h1v3h-1zM519 97h1v3h-1zM527 97h1v3h-1zM543 97h1v3h-1zM551 97h1v3h-1zM558 97h1v3h-1zM566 97h1v3h-1zM574 97h1v3h-1zM582 97h1v3h-1zM590 97h1v3h-1zM598 97h1v3h-1zM606 97h1v3h-1zM622 97h1v3h-1zM630 97h1v3h-1zM638 97h1v3h-1zM645 97h1v3h-1zM653 97h1v3h-1zM661 97h1v3h-1zM669 97h1v3h-1zM677 97h1v3h-1zM685 97h1v3h-1zM701 97h1v3h-1zM709 97h1v3h-1zM717 97h1v3h-1zM725 97h1v3h-1zM732 97h1v3h-1zM740 97h1v3h-1zM748 97h1v3h-1zM756 97h1v3h-1zM764 97h1v3h-1zM780 97h1v3h-1zM788 97h1v3h-1zM796 97h1v3h-1zM804 97h1v3h-1zM812 97h1v3h-1zM820 97h1v3h-1zM827 97h1v3h-1zM835 97h1v3h-1zM843 97h1v3h-1zM859 97h1v3h-1zM867 97h1v3h-1zM875 97h1v3h-1zM883 97h1v3h-1zM891 97h1v3h-1zM899 97h1v3h-1zM907 97h1v3h-1zM914 97h1v3h-1zM922 97h1v3h-1zM938 97h1v3h-1zM946 97h1v3h-1zM954 97h1v3h-1zM962 97h1v3h-1zM970 97h1v3h-1zM978 97h1v3h-1zM986 97h1v3h-1zM994 97h1v3h-1zM1001 97h1v3h-1zM1017 97h1v3h-1zM1025 97h1v3h-1zM1033 97h1v3h-1zM1041 97h1v3h-1zM1049 97h1v3h-1zM1057 97h1v3h-1zM1065 97h1v3h-1zM1073 97h1v3h-1zM1081 97h1v3h-1zM1096 97h1v3h-1zM1104 97h1v3h-1zM1112 97h1v3h-1zM1120 97h1v3h-1zM1128 97h1v3h-1zM1136 97h1v3h-1zM1144 97h1v3h-1zM1152 97h1v3h-1zM1160 97h1v3h-1zM1176 97h1v3h-1zM1183 97h1v3h-1zM1191 97h1v3h-1zM1199 97h1v3h-1zM1207 97h1v3h-1zM1215 97h1v3h-1zM1223 97h1v3h-1zM1231 97h1v3h-1zM1239 97h1v3h-1zM1255 97h1v3h-1zM1263 97h1v3h-1zM1270 97h1v3h-1zM1278 97h1v3h-1zM1286 97h1v3h-1zM1294 97h1v3h-1zM1302 97h1v3h-1zM1310 97h1v3h-1zM1318 97h1v3h-1zM1334 97h1v3h-1zM1342 97h1v3h-1zM1350 97h1v3h-1zM1357 97h1v3h-1zM1365 97h1v3h-1zM1373 97h1v3h-1zM1381 97h1v3h-1zM1389 97h1v3h-1zM1397 97h1v3h-1zM1413 97h1v3h-1zM1421 97h1v3h-1zM1429 97h1v3h-1zM1437 97h1v3h-1zM1444 97h1v3h-1zM1452 97h1v3h-1zM1460 97h1v3h-1zM1468 97h1v3h-1zM1476 97h1v3h-1zM1492 97h1v3h-1zM1500 97h1v3h-1zM1508 97h1v3h-1zM1516 97h1v3h-1zM1524 97h1v3h-1zM1532 97h1v3h-1zM1539 97h1v3h-1zM1547 97h1v3h-1zM1555 97h1v3h-1zM1571 97h1v3h-1zM1579 97h1v3h-1zM1587 97h1v3h-1zM1595 97h1v3h-1zM1603 97h1v3h-1zM1611 97h1v3h-1zM1619 97h1v3h-1zM1626 97h1v3h-1zM1634 97h1v3h-1zM1650 97h1v3h-1zM1658 97h1v3h-1zM1666 97h1v3h-1zM1674 97h1v3h-1zM1682 97h1v3h-1zM1690 97h1v3h-1zM1698 97h1v3h-1zM1706 97h1v3h-1zM1713 97h1v3h-1zM1729 97h1v3h-1zM1737 97h1v3h-1zM1745 97h1v3h-1zM1753 97h1v3h-1zM1761 97h1v3h-1zM1769 97h1v3h-1zM1777 97h1v3h-1zM1785 97h1v3h-1zM1793 97h1v3h-1zM1808 97h1v3h-1zM1816 97h1v3h-1zM1824 97h1v3h-1zM1832 97h1v3h-1zM1840 97h1v3h-1zM1848 97h1v3h-1zM1856 97h1v3h-1zM1864 97h1v3h-1zM1872 97h1v3h-1zM1888 97h1v3h-1zM455 94h2v6h-2zM534 94h2v6h-2zM613 94h2v6h-2zM692 94h2v6h-2zM771 94h2v6h-2zM850 94h2v6h-2zM929 94h2v6h-2zM1008 94h2v6h-2zM1087 94h2v6h-2zM1167 94h2v6h-2zM1246 94h2v6h-2zM1325 94h2v6h-2zM1404 94h2v6h-2zM1483 94h2v6h-2zM1562 94h2v6h-2zM1641 94h2v6h-2zM1720 94h2v6h-2zM1799 94h2v6h-2zM1879 94h2v6h-2z" fill="#d8d8d8"/>
<rect x="377" y="939" width="1519" height="1" fill="#d0d0d0"/>
<path d="M377 940h1v3h-1zM384 940h1v3h-1zM392 940h1v3h-1zM400 940h1v3h-1zM408 940h1v3h-1zM416 940h1v3h-1zM424 940h1v3h-1zM432 940h1v3h-1zM440 940h1v3h-1zM448 940h1v3h-1zM464 940h1v3h-1zM471 940h1v3h-1zM479 940h1v3h-1zM487 940h1v3h-1zM495 940h1v3h-1zM503 940h1v3h-1zM511 940h1v3h-1zM519 940h1v3h-1zM527 940h1v3h-1zM543 940h1v3h-1zM551 940h1v3h-1zM558 940h1v3h-1zM566 940h1v3h-1zM574 940h1v3h-1zM582 940h1v3h-1zM590 940h1v3h-1zM598 940h1v3h-1zM606 940h1v3h-1zM622 940h1v3h-1zM630 940h1v3h-1zM638 940h1v3h-1zM645 940h1v3h-1zM653 940h1v3h-1zM661 940h1v3h-1zM669 940h1v3h-1zM677 940h1v3h-1zM685 940h1v3h-1zM701 940h1v3h-1zM709 940h1v3h-1zM717 940h1v3h-1zM725 940h1v3h-1zM732 940h1v3h-1zM740 940h1v3h-1zM748 940h1v3h-1zM756 940h1v3h-1zM764 940h1v3h-1zM780 940h1v3h-1zM788 940h1v3h-1zM796 940h1v3h-1zM804 940h1v3h-1zM812 940h1v3h-1zM820 940h1v3h-1zM827 940h1v3h-1zM835 940h1v3h-1zM843 940h1v3h-1zM859 940h1v3h-1zM867 940h1v3h-1zM875 940h1v3h-1zM883 940h1v3h-1zM891 940h1v3h-1zM899 940h1v3h-1zM907 940h1v3h-1zM914 940h1v3h-1zM922 940h1v3h-1zM938 940h1v3h-1zM946 940h1v3h-1zM954 940h1v3h-1zM962 940h1v3h-1zM970 940h1v3h-1zM978 940h1v3h-1zM986 940h1v3h-1zM994 940h1v3h-1zM1001 940h1v3h-1zM1017 940h1v3h-1zM1025 940h1v3h-1zM1033 940h1v3h-1zM1041 940h1v3h-1zM1049 940h1v3h-1zM1057 940h1v3h-1zM1065 940h1v3h-1zM1073 940h1v3h-1zM1081 940h1v3h-1zM1096 940h1v3h-1zM1104 940h1v3h-1zM1112 940h1v3h-1zM1120 940h1v3h-1zM1128 940h1v3h-1zM1136 940h1v3h-1zM1144 940h1v3h-1zM1152 940h1v3h-1zM1160 940h1v3h-1zM1176 940h1v3h-1zM1183 940h1v3h-1zM1191 940h1v3h-1zM1199 940h1v3h-1zM1207 940h1v3h-1zM1215 940h1v3h-1zM1223 940h1v3h-1zM1231 940h1v3h-1zM1239 940h1v3h-1zM1255 940h1v3h-1zM1263 940h1v3h-1zM1270 940h1v3h-1zM1278 940h1v3h-1zM1286 940h1v3h-1zM1294 940h1v3h-1zM1302 940h1v3h-1zM1310 940h1v3h-1zM1318 940h1v3h-1zM1334 940h1v3h-1zM1342 940h1v3h-1zM1350 940h1v3h-1zM1357 940h1v3h-1zM1365 940h1v3h-1zM1373 940h1v3h-1zM1381 940h1v3h-1zM1389 940h1v3h-1zM1397 940h1v3h-1zM1413 940h1v3h-1zM1421 940h1v3h-1zM1429 940h1v3h-1zM1437 940h1v3h-1zM1444 940h1v3h-1zM1452 940h1v3h-1zM1460 940h1v3h-1zM1468 940h1v3h-1zM1476 940h1v3h-1zM1492 940h1v3h-1zM1500 940h1v3h-1zM1508 940h1v3h-1zM1516 940h1v3h-1zM1524 940h1v3h-1zM1532 940h1v3h-1zM1539 940h1v3h-1zM1547 940h1v3h-1zM1555 940h1v3h-1zM1571 940h1v3h-1zM1579 940h1v3h-1zM1587 940h1v3h-1zM1595 940h1v3h-1zM1603 940h1v3h-1zM1611 940h1v3h-1zM1619 940h1v3h-1zM1626 940h1v3h-1zM1634 940h1v3h-1zM1650 940h1v3h-1zM1658 940h1v3h-1zM1666 940h1v3h-1zM1674 940h1v3h-1zM1682 940h1v3h-1zM1690 940h1v3h-1zM1698 940h1v3h-1zM1706 940h1v3h-1zM1713 940h1v3h-1zM1729 940h1v3h-1zM1737 940h1v3h-1zM1745 940h1v3h-1zM1753 940h1v3h-1zM1761 940h1v3h-1zM1769 940h1v3h-1zM1777 940h1v3h-1zM1785 940h1v3h-1zM1793 940h1v3h-1zM1808 940h1v3h-1zM1816 940h1v3h-1zM1824 940h1v3h-1zM1832 940h1v3h-1zM1840 940h1v3h-1zM1848 940h1v3h-1zM1856 940h1v3h-1zM1864 940h1v3h-1zM1872 940h1v3h-1zM1888 940h1v3h-1zM455 940h2v5h-2zM534 940h2v5h-2zM613 940h2v5h-2zM692 940h2v5h-2zM771 940h2v5h-2zM850 940h2v5h-2zM929 940h2v5h-2zM1008 940h2v5h-2zM1087 940h2v5h-2zM1167 940h2v5h-2zM1246 940h2v5h-2zM1325 940h2v5h-2zM1404 940h2v5h-2zM1483 940h2v5h-2zM1562 940h2v5h-2zM1641 940h2v5h-2zM1720 940h2v5h-2zM1799 940h2v5h-2zM1879 940h2v5h-2z" fill="#d8d8d8"/>
<g fill="#dcdcdc" font-size="10px" text-anchor="middle" style="letter-spacing:0.42px">
<text transform="rotate(0.1 455.9 91)" x="455.9" y="91">400000</text><text transform="rotate(0.1 455.9 956)" x="455.9" y="956">400000</text>
<text transform="rotate(0.1 535.0 91)" x="535.0" y="91">800000</text><text transform="rotate(0.1 535.0 956)" x="535.0" y="956">800000</text>
<text transform="rotate(0.1 614.1 91)" x="614.1" y="91">1200000</text><text transform="rotate(0.1 614.1 956)" x="614.1" y="956">1200000</text>
<text transform="rotate(0.1 693.2 91)" x="693.2" y="91">1600000</text><text transform="rotate(0.1 693.2 956)" x="693.2" y="956">1600000</text>
<text transform="rotate(0.1 772.3 91)" x="772.3" y="91">2000000</text><text transform="rotate(0.1 772.3 956)" x="772.3" y="956">2000000</text>
<text transform="rotate(0.1 851.5 91)" x="851.5" y="91">2400000</text><text transform="rotate(0.1 851.5 956)" x="851.5" y="956">2400000</text>
<text transform="rotate(0.1 930.6 91)" x="930.6" y="91">2800000</text><text transform="rotate(0.1 930.6 956)" x="930.6" y="956">2800000</text>
<text transform="rotate(0.1 1009.7 91)" x="1009.7" y="91">3200000</text><text transform="rotate(0.1 1009.7 956)" x="1009.7" y="956">3200000</text>
<text transform="rotate(0.1 1088.8 91)" x="1088.8" y="91">3600000</text><text transform="rotate(0.1 1088.8 956)" x="1088.8" y="956">3600000</text>
<text transform="rotate(0.1 1167.9 91)" x="1167.9" y="91">4000000</text><text transform="rotate(0.1 1167.9 956)" x="1167.9" y="956">4000000</text>
<text transform="rotate(0.1 1247.0 91)" x="1247.0" y="91">4400000</text><text transform="rotate(0.1 1247.0 956)" x="1247.0" y="956">4400000</text>
<text transform="rotate(0.1 1326.1 91)" x="1326.1" y="91">4800000</text><text transform="rotate(0.1 1326.1 956)" x="1326.1" y="956">4800000</text>
<text transform="rotate(0.1 1405.2 91)" x="1405.2" y="91">5200000</text><text transform="rotate(0.1 1405.2 956)" x="1405.2" y="956">5200000</text>
<text transform="rotate(0.1 1484.3 91)" x="1484.3" y="91">5600000</text><text transform="rotate(0.1 1484.3 956)" x="1484.3" y="956">5600000</text>
<text transform="rotate(0.1 1563.4 91)" x="1563.4" y="91">6000000</text><text transform="rotate(0.1 1563.4 956)" x="1563.4" y="956">6000000</text>
<text transform="rotate(0.1 1642.6 91)" x="1642.6" y="91">6400000</text><text transform="rotate(0.1 1642.6 956)" x="1642.6" y="956">6400000</text>
<text transform="rotate(0.1 1721.7 91)" x="1721.7" y="91">6800000</text><text transform="rotate(0.1 1721.7 956)" x="1721.7" y="956">6800000</text>
<text transform="rotate(0.1 1800.8 91)" x="1800.8" y="91">7200000</text><text transform="rotate(0.1 1800.8 956)" x="1800.8" y="956">7200000</text>
<text transform="rotate(0.1 1879.9 91)" x="1879.9" y="91">7600000</text><text transform="rotate(0.1 1879.9 956)" x="1879.9" y="956">7600000</text>
<text transform="rotate(0.1 377.0 956)" x="377.0" y="956">0</text>
</g>
<rect x="377" y="959" width="1519" height="1" fill="#242424"/>
<rect x="377" y="979" width="1519" height="1" fill="#242424"/>
<rect x="377" y="999" width="1519" height="1" fill="#242424"/>
<rect x="377" y="1019" width="1519" height="1" fill="#242424"/>
<rect x="684" y="81" width="1" height="899" fill="#8b8b00"/>
<rect x="1052" y="81" width="2" height="919" fill="#ffff00"/>
<rect x="1397" y="81" width="1" height="879" fill="#8b0000"/>
<rect x="1624" y="81" width="1" height="939" fill="#8b8b00"/>
<rect x="660.5" y="980.5" width="48" height="18" fill="#000" stroke="#8b8b00" stroke-width="1"/>
<text x="683.6" y="993.2" fill="#8b8b00" font-size="11px" text-anchor="middle" style="letter-spacing:-0.14px">1552464</text>
<rect x="1029.5" y="1000.5" width="48" height="18" fill="#000" stroke="#ffff00" stroke-width="1"/>
<text x="1052.6" y="1013.2" fill="#ffff00" font-size="11px" text-anchor="middle" style="letter-spacing:-0.14px">3418393</text>
<rect x="1373.5" y="960.5" width="48" height="18" fill="#000" stroke="#8b0000" stroke-width="1"/>
<text x="1396.6" y="973.2" fill="#8b0000" font-size="11px" text-anchor="middle" style="letter-spacing:-0.14px">5157003</text>
<rect x="1600.5" y="1020.5" width="48" height="18" fill="#000" stroke="#8b8b00" stroke-width="1"/>
<text x="1623.6" y="1033.2" fill="#8b8b00" font-size="11px" text-anchor="middle" style="letter-spacing:-0.14px">6309745</text>
<g shape-rendering="auto" stroke="#e0e0e0" stroke-width="1" fill="none">
<path d="M710 988.5H858.15M900.4499999999999 988.5H1051"/>
<path d="M714.5 984.5L710 988.5L714.5 992.5M1046.5 984.5L1051 988.5L1046.5 992.5"/></g>
<text x="879.3" y="992.9" fill="#e0e0e0" font-size="11px" text-anchor="middle" style="letter-spacing:-0.14px">1865929</text>
<g shape-rendering="auto" stroke="#e0e0e0" stroke-width="1" fill="none">
<path d="M1055 968.5H1191.1499999999999M1233.45 968.5H1372"/>
<path d="M1059.5 964.5L1055 968.5L1059.5 972.5M1367.5 964.5L1372 968.5L1367.5 972.5"/></g>
<text x="1212.3" y="972.9" fill="#e0e0e0" font-size="11px" text-anchor="middle" style="letter-spacing:-0.14px">1738610</text>
<g shape-rendering="auto" stroke="#e0e0e0" stroke-width="1" fill="none">
<path d="M1423 968.5H1500.6499999999999M1542.95 968.5H1623"/>
<path d="M1427.5 964.5L1423 968.5L1427.5 972.5M1618.5 964.5L1623 968.5L1618.5 972.5"/></g>
<text x="1521.8" y="972.9" fill="#e0e0e0" font-size="11px" text-anchor="middle" style="letter-spacing:-0.14px">1152742</text>
<g shape-rendering="auto" stroke="#e0e0e0" stroke-width="1" fill="none">
<path d="M1079 1008.5H1328.6499999999999M1370.95 1008.5H1623"/>
<path d="M1083.5 1004.5L1079 1008.5L1083.5 1012.5M1618.5 1004.5L1623 1008.5L1618.5 1012.5"/></g>
<text x="1349.8" y="1012.9" fill="#e0e0e0" font-size="11px" text-anchor="middle" style="letter-spacing:-0.14px">2891352</text>
<path d="M377 101h1v1h-1zM377 104h1v1h-1zM377 107h1v1h-1zM377 110h1v1h-1zM377 113h1v1h-1zM377 116h1v1h-1zM377 119h1v1h-1zM377 122h1v1h-1zM377 125h1v1h-1zM377 128h1v1h-1zM377 131h1v1h-1zM377 134h1v1h-1zM377 137h1v1h-1zM377 140h1v1h-1zM377 143h1v1h-1zM377 146h1v1h-1zM377 149h1v1h-1zM377 152h1v1h-1zM377 155h1v1h-1zM377 158h1v1h-1zM377 161h1v1h-1zM377 164h1v1h-1zM377 167h1v1h-1zM377 170h1v1h-1zM377 173h1v1h-1zM377 176h1v1h-1zM377 179h1v1h-1zM377 182h1v1h-1zM377 185h1v1h-1zM377 188h1v1h-1zM377 191h1v1h-1zM377 194h1v1h-1zM377 197h1v1h-1zM377 200h1v1h-1zM377 203h1v1h-1zM377 206h1v1h-1zM377 209h1v1h-1zM377 212h1v1h-1zM377 215h1v1h-1zM377 218h1v1h-1zM377 221h1v1h-1zM377 224h1v1h-1zM377 227h1v1h-1zM377 230h1v1h-1zM377 233h1v1h-1zM377 236h1v1h-1zM377 239h1v1h-1zM377 242h1v1h-1zM377 245h1v1h-1zM377 248h1v1h-1zM377 251h1v1h-1zM377 254h1v1h-1zM377 257h1v1h-1zM377 260h1v1h-1zM377 263h1v1h-1zM377 266h1v1h-1zM377 269h1v1h-1zM377 272h1v1h-1zM377 275h1v1h-1zM377 278h1v1h-1zM377 281h1v1h-1zM377 284h1v1h-1zM377 287h1v1h-1zM377 290h1v1h-1zM377 293h1v1h-1zM377 296h1v1h-1zM377 299h1v1h-1zM377 302h1v1h-1zM377 305h1v1h-1zM377 308h1v1h-1zM377 311h1v1h-1zM377 314h1v1h-1zM377 317h1v1h-1zM377 320h1v1h-1zM377 323h1v1h-1zM377 326h1v1h-1zM377 329h1v1h-1zM377 332h1v1h-1zM377 335h1v1h-1zM377 338h1v1h-1zM377 341h1v1h-1zM377 344h1v1h-1zM377 347h1v1h-1zM377 350h1v1h-1zM377 353h1v1h-1zM377 356h1v1h-1zM377 359h1v1h-1zM377 362h1v1h-1zM377 365h1v1h-1zM377 368h1v1h-1zM377 371h1v1h-1zM377 374h1v1h-1zM377 377h1v1h-1zM377 380h1v1h-1zM377 383h1v1h-1zM377 386h1v1h-1zM377 389h1v1h-1zM377 392h1v1h-1zM377 395h1v1h-1zM377 398h1v1h-1zM377 401h1v1h-1zM377 404h1v1h-1zM377 407h1v1h-1zM377 410h1v1h-1zM377 413h1v1h-1zM377 416h1v1h-1zM377 419h1v1h-1zM377 422h1v1h-1zM377 425h1v1h-1zM377 428h1v1h-1zM377 431h1v1h-1zM377 434h1v1h-1zM377 437h1v1h-1zM377 440h1v1h-1zM377 443h1v1h-1zM377 446h1v1h-1zM377 449h1v1h-1zM377 452h1v1h-1zM377 455h1v1h-1zM377 458h1v1h-1zM377 461h1v1h-1zM377 464h1v1h-1zM377 467h1v1h-1zM377 470h1v1h-1zM377 473h1v1h-1zM377 476h1v1h-1zM377 479h1v1h-1zM377 482h1v1h-1zM377 485h1v1h-1zM377 488h1v1h-1zM377 491h1v1h-1zM377 494h1v1h-1zM377 497h1v1h-1zM377 500h1v1h-1zM377 503h1v1h-1zM377 506h1v1h-1zM377 509h1v1h-1zM377 512h1v1h-1zM377 515h1v1h-1zM377 518h1v1h-1zM377 521h1v1h-1zM377 524h1v1h-1zM377 527h1v1h-1zM377 530h1v1h-1zM377 533h1v1h-1zM377 536h1v1h-1zM377 539h1v1h-1zM377 542h1v1h-1zM377 545h1v1h-1zM377 548h1v1h-1zM377 551h1v1h-1zM377 554h1v1h-1zM377 557h1v1h-1zM377 560h1v1h-1zM377 563h1v1h-1zM377 566h1v1h-1zM377 569h1v1h-1zM377 572h1v1h-1zM377 575h1v1h-1zM377 578h1v1h-1zM377 581h1v1h-1zM377 584h1v1h-1zM377 587h1v1h-1zM377 590h1v1h-1zM377 593h1v1h-1zM377 596h1v1h-1zM377 599h1v1h-1zM377 602h1v1h-1zM377 605h1v1h-1zM377 608h1v1h-1zM377 611h1v1h-1zM377 614h1v1h-1zM377 617h1v1h-1zM377 620h1v1h-1zM377 623h1v1h-1zM377 626h1v1h-1zM377 629h1v1h-1zM377 632h1v1h-1zM377 635h1v1h-1zM377 638h1v1h-1zM377 641h1v1h-1zM377 644h1v1h-1zM377 647h1v1h-1zM377 650h1v1h-1zM377 653h1v1h-1zM377 656h1v1h-1zM377 659h1v1h-1zM377 662h1v1h-1zM377 665h1v1h-1zM377 668h1v1h-1zM377 671h1v1h-1zM377 674h1v1h-1zM377 677h1v1h-1zM377 680h1v1h-1zM377 683h1v1h-1zM377 686h1v1h-1zM377 689h1v1h-1zM377 692h1v1h-1zM377 695h1v1h-1zM377 698h1v1h-1zM377 701h1v1h-1zM377 704h1v1h-1zM377 707h1v1h-1zM377 710h1v1h-1zM377 713h1v1h-1zM377 716h1v1h-1zM377 719h1v1h-1zM377 722h1v1h-1zM377 725h1v1h-1zM377 728h1v1h-1zM377 731h1v1h-1zM377 734h1v1h-1zM377 737h1v1h-1zM377 740h1v1h-1zM377 743h1v1h-1zM377 746h1v1h-1zM377 749h1v1h-1zM377 752h1v1h-1zM377 755h1v1h-1zM377 758h1v1h-1zM377 761h1v1h-1zM377 764h1v1h-1zM377 767h1v1h-1zM377 770h1v1h-1zM377 773h1v1h-1zM377 776h1v1h-1zM377 779h1v1h-1zM377 782h1v1h-1zM377 785h1v1h-1zM377 788h1v1h-1zM377 791h1v1h-1zM377 794h1v1h-1zM377 797h1v1h-1zM377 800h1v1h-1zM377 803h1v1h-1zM377 806h1v1h-1zM377 809h1v1h-1zM377 812h1v1h-1zM377 815h1v1h-1zM377 818h1v1h-1zM377 821h1v1h-1zM377 824h1v1h-1zM377 827h1v1h-1zM377 830h1v1h-1zM377 833h1v1h-1zM377 836h1v1h-1zM377 839h1v1h-1zM377 842h1v1h-1zM377 845h1v1h-1zM377 848h1v1h-1zM377 851h1v1h-1zM377 854h1v1h-1zM377 857h1v1h-1zM377 860h1v1h-1zM377 863h1v1h-1zM377 866h1v1h-1zM377 869h1v1h-1zM377 872h1v1h-1zM377 875h1v1h-1zM377 878h1v1h-1zM377 881h1v1h-1zM377 884h1v1h-1zM377 887h1v1h-1zM377 890h1v1h-1zM377 893h1v1h-1zM377 896h1v1h-1zM377 899h1v1h-1zM377 902h1v1h-1zM377 905h1v1h-1zM377 908h1v1h-1zM377 911h1v1h-1zM377 914h1v1h-1zM377 917h1v1h-1zM377 920h1v1h-1zM377 923h1v1h-1zM377 926h1v1h-1zM377 929h1v1h-1zM377 932h1v1h-1zM377 935h1v1h-1zM377 938h1v1h-1z" fill="#ff0000"/>
<path d="M377 81h4v14h-1v-13h-3zM377 95h5l-5 5z" fill="#ff0000"/>
</svg>
<div class="abs" style="left:6px;top:1039px;width:1890px;height:1px;background:#fafafa"></div>
<div class="abs" style="left:5px;top:80px;width:1px;height:960px;background:#fafafa"></div>
<svg class="abs" style="left:0;top:1039px" width="1920" height="19" viewBox="0 1039 1920 19">
<rect x="23" y="1040" width="61" height="16" fill="#cdcdcd"/>
<rect x="310" y="1040" width="31" height="16" fill="#cdcdcd"/>
<path d="M15.8 1044.0L11.799999999999999 1047.6L15.8 1051.1999999999998" fill="none" stroke="#505050" stroke-width="1.9"/>
<path d="M279.8 1044.0L283.8 1047.6L279.8 1051.1999999999998" fill="none" stroke="#505050" stroke-width="1.9"/>
<path d="M303.0 1044.0L299.0 1047.6L303.0 1051.1999999999998" fill="none" stroke="#505050" stroke-width="1.9"/>
<path d="M363.8 1044.0L367.8 1047.6L363.8 1051.1999999999998" fill="none" stroke="#505050" stroke-width="1.9"/>
<path d="M387.0 1044.0L383.0 1047.6L387.0 1051.1999999999998" fill="none" stroke="#bfbfbf" stroke-width="1.9"/>
<path d="M1885.8 1044.0L1889.8 1047.6L1885.8 1051.1999999999998" fill="none" stroke="#bfbfbf" stroke-width="1.9"/>
<rect x="1896" y="1039" width="18" height="18" fill="#000"/>
</svg>
<svg class="abs" style="left:1896px;top:81px" width="20" height="958" viewBox="1896 81 20 958">
<rect x="1897" y="98" width="16" height="210" fill="#cdcdcd"/>
<path d="M1901.4 92.2L1905 88.4L1908.6 92.2" fill="none" stroke="#505050" stroke-width="1.9"/>
<path d="M1901.4 1028.8L1905 1032.6L1908.6 1028.8" fill="none" stroke="#505050" stroke-width="1.9"/>
</svg>
<div class="abs" style="left:0;top:1077px;width:1920px;height:1px;background:#fafafa"></div>
<div class="abs" style="left:0;top:1078px;width:1920px;height:2px;background:#1c1c1c"></div>
<div class="abs" style="left:48px;top:1078px;width:344px;height:2px;background:#6b6966"></div>
</body></html>
